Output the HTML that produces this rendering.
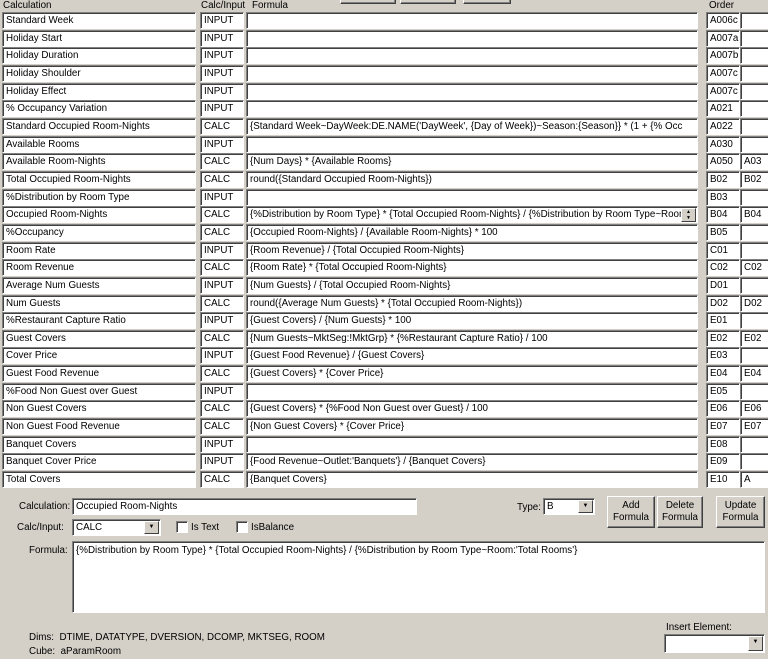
<!DOCTYPE html>
<html><head><meta charset="utf-8"><style>
*{box-sizing:border-box;margin:0;padding:0}
body{width:768px;height:659px;overflow:hidden;background:#d4d0c8;font-family:"Liberation Sans",sans-serif;font-size:9.8px;color:#000;position:relative}
.a{position:absolute;white-space:nowrap}
.tb{position:absolute;background:#fff;border:1px solid;border-color:#808080 #fff #fff #808080;box-shadow:inset 1px 1px #404040;padding:2px 0 0 3px;overflow:hidden;white-space:nowrap;height:17px;line-height:12px}
.rows{position:absolute;top:12px;left:0;width:768px}
.r{position:relative;height:17.67px}
.r .tb{top:0;height:17px}
.c1{left:2px;width:194px}.c2{left:200px;width:44px}.c3{left:246px;width:452px}.c4{left:706px;width:34px}.c5{left:740px;width:40px}
.btn{position:absolute;background:#d4d0c8;border:1px solid;border-color:#fff #404040 #404040 #fff;box-shadow:inset -1px -1px #808080;text-align:center;line-height:12px;padding-top:3px}
.dd{position:absolute;right:1px;top:1px;width:15px;height:13px;background:#d4d0c8;border:1px solid;border-color:#fff #404040 #404040 #fff;font-size:6px;text-align:center;line-height:11px}
.cb{position:absolute;width:12px;height:12px;background:#fff;border:1px solid;border-color:#808080 #fff #fff #808080;box-shadow:inset 1px 1px #404040}
</style></head><body>
<div class="btn" style="left:340px;top:-12px;width:56px;height:16px"></div>
<div class="btn" style="left:400px;top:-12px;width:56px;height:16px"></div>
<div class="btn" style="left:463px;top:-12px;width:48px;height:16px"></div>
<div class="a" style="left:3px;top:0">Calculation</div>
<div class="a" style="left:201px;top:0">Calc/Input</div>
<div class="a" style="left:252px;top:0">Formula</div>
<div class="a" style="left:709px;top:0">Order</div>
<div class="rows">
<div class="r"><div class="tb c1">Standard Week</div><div class="tb c2">INPUT</div><div class="tb c3"></div><div class="tb c4">A006c</div><div class="tb c5"></div></div>
<div class="r"><div class="tb c1">Holiday Start</div><div class="tb c2">INPUT</div><div class="tb c3"></div><div class="tb c4">A007a</div><div class="tb c5"></div></div>
<div class="r"><div class="tb c1">Holiday Duration</div><div class="tb c2">INPUT</div><div class="tb c3"></div><div class="tb c4">A007b</div><div class="tb c5"></div></div>
<div class="r"><div class="tb c1">Holiday Shoulder</div><div class="tb c2">INPUT</div><div class="tb c3"></div><div class="tb c4">A007c</div><div class="tb c5"></div></div>
<div class="r"><div class="tb c1">Holiday Effect</div><div class="tb c2">INPUT</div><div class="tb c3"></div><div class="tb c4">A007c</div><div class="tb c5"></div></div>
<div class="r"><div class="tb c1">% Occupancy Variation</div><div class="tb c2">INPUT</div><div class="tb c3"></div><div class="tb c4">A021</div><div class="tb c5"></div></div>
<div class="r"><div class="tb c1">Standard Occupied Room-Nights</div><div class="tb c2">CALC</div><div class="tb c3">{Standard Week~DayWeek:DE.NAME('DayWeek', {Day of Week})~Season:{Season}} * (1 + {% Occ</div><div class="tb c4">A022</div><div class="tb c5"></div></div>
<div class="r"><div class="tb c1">Available Rooms</div><div class="tb c2">INPUT</div><div class="tb c3"></div><div class="tb c4">A030</div><div class="tb c5"></div></div>
<div class="r"><div class="tb c1">Available Room-Nights</div><div class="tb c2">CALC</div><div class="tb c3">{Num Days} * {Available Rooms}</div><div class="tb c4">A050</div><div class="tb c5">A03</div></div>
<div class="r"><div class="tb c1">Total Occupied Room-Nights</div><div class="tb c2">CALC</div><div class="tb c3">round({Standard Occupied Room-Nights})</div><div class="tb c4">B02</div><div class="tb c5">B02</div></div>
<div class="r"><div class="tb c1">%Distribution by Room Type</div><div class="tb c2">INPUT</div><div class="tb c3"></div><div class="tb c4">B03</div><div class="tb c5"></div></div>
<div class="r"><div class="tb c1">Occupied Room-Nights</div><div class="tb c2">CALC</div><div class="tb c3" style="padding-right:18px">{%Distribution by Room Type} * {Total Occupied Room-Nights} / {%Distribution by Room Type~Room<div class="dd" style="height:14px;font-size:5px;line-height:6px">▲<br>▼</div></div><div class="tb c4">B04</div><div class="tb c5">B04</div></div>
<div class="r"><div class="tb c1">%Occupancy</div><div class="tb c2">CALC</div><div class="tb c3">{Occupied Room-Nights} / {Available Room-Nights} * 100</div><div class="tb c4">B05</div><div class="tb c5"></div></div>
<div class="r"><div class="tb c1">Room Rate</div><div class="tb c2">INPUT</div><div class="tb c3">{Room Revenue} / {Total Occupied Room-Nights}</div><div class="tb c4">C01</div><div class="tb c5"></div></div>
<div class="r"><div class="tb c1">Room Revenue</div><div class="tb c2">CALC</div><div class="tb c3">{Room Rate} * {Total Occupied Room-Nights}</div><div class="tb c4">C02</div><div class="tb c5">C02</div></div>
<div class="r"><div class="tb c1">Average Num Guests</div><div class="tb c2">INPUT</div><div class="tb c3">{Num Guests} / {Total Occupied Room-Nights}</div><div class="tb c4">D01</div><div class="tb c5"></div></div>
<div class="r"><div class="tb c1">Num Guests</div><div class="tb c2">CALC</div><div class="tb c3">round({Average Num Guests} * {Total Occupied Room-Nights})</div><div class="tb c4">D02</div><div class="tb c5">D02</div></div>
<div class="r"><div class="tb c1">%Restaurant Capture Ratio</div><div class="tb c2">INPUT</div><div class="tb c3">{Guest Covers} / {Num Guests} * 100</div><div class="tb c4">E01</div><div class="tb c5"></div></div>
<div class="r"><div class="tb c1">Guest Covers</div><div class="tb c2">CALC</div><div class="tb c3">{Num Guests~MktSeg:!MktGrp} * {%Restaurant Capture Ratio} / 100</div><div class="tb c4">E02</div><div class="tb c5">E02</div></div>
<div class="r"><div class="tb c1">Cover Price</div><div class="tb c2">INPUT</div><div class="tb c3">{Guest Food Revenue} / {Guest Covers}</div><div class="tb c4">E03</div><div class="tb c5"></div></div>
<div class="r"><div class="tb c1">Guest Food Revenue</div><div class="tb c2">CALC</div><div class="tb c3">{Guest Covers} * {Cover Price}</div><div class="tb c4">E04</div><div class="tb c5">E04</div></div>
<div class="r"><div class="tb c1">%Food Non Guest over Guest</div><div class="tb c2">INPUT</div><div class="tb c3"></div><div class="tb c4">E05</div><div class="tb c5"></div></div>
<div class="r"><div class="tb c1">Non Guest Covers</div><div class="tb c2">CALC</div><div class="tb c3">{Guest Covers} * {%Food Non Guest over Guest} / 100</div><div class="tb c4">E06</div><div class="tb c5">E06</div></div>
<div class="r"><div class="tb c1">Non Guest Food Revenue</div><div class="tb c2">CALC</div><div class="tb c3">{Non Guest Covers} * {Cover Price}</div><div class="tb c4">E07</div><div class="tb c5">E07</div></div>
<div class="r"><div class="tb c1">Banquet Covers</div><div class="tb c2">INPUT</div><div class="tb c3"></div><div class="tb c4">E08</div><div class="tb c5"></div></div>
<div class="r"><div class="tb c1">Banquet Cover Price</div><div class="tb c2">INPUT</div><div class="tb c3">{Food Revenue~Outlet:'Banquets'} / {Banquet Covers}</div><div class="tb c4">E09</div><div class="tb c5"></div></div>
<div class="r"><div class="tb c1">Total Covers</div><div class="tb c2">CALC</div><div class="tb c3">{Banquet Covers}</div><div class="tb c4">E10</div><div class="tb c5">A</div></div>
</div>

<div class="a" style="left:19px;top:501px">Calculation:</div>
<div class="tb" style="left:72px;top:498px;width:345px">Occupied Room-Nights</div>
<div class="a" style="left:17px;top:522px">Calc/Input:</div>
<div class="tb" style="left:72px;top:519px;width:89px">CALC<div class="dd">▼</div></div>
<div class="cb" style="left:176px;top:521px"></div><div class="a" style="left:191px;top:522px">Is Text</div>
<div class="cb" style="left:236px;top:521px"></div><div class="a" style="left:251px;top:522px">IsBalance</div>
<div class="a" style="left:29px;top:545px">Formula:</div>
<div class="tb" style="left:72px;top:541px;width:693px;height:72px;padding-top:3px">{%Distribution by Room Type} * {Total Occupied Room-Nights} / {%Distribution by Room Type~Room:'Total Rooms'}</div>

<div class="a" style="left:517px;top:502px">Type:</div>
<div class="tb" style="left:543px;top:498px;width:52px">B<div class="dd">▼</div></div>
<div class="btn" style="left:607px;top:496px;width:48px;height:32px">Add<br>Formula</div>
<div class="btn" style="left:657px;top:496px;width:46px;height:32px">Delete<br>Formula</div>
<div class="btn" style="left:716px;top:496px;width:49px;height:32px">Update<br>Formula</div>

<div class="a" style="left:29px;top:632px">Dims:&nbsp; DTIME, DATATYPE, DVERSION, DCOMP, MKTSEG, ROOM</div>
<div class="a" style="left:29px;top:646px">Cube:&nbsp; aParamRoom</div>
<div class="a" style="left:666px;top:622px">Insert Element:</div>
<div class="tb" style="left:664px;top:634px;width:101px;height:19px"><div class="dd" style="height:15px">▼</div></div>
</body></html>
